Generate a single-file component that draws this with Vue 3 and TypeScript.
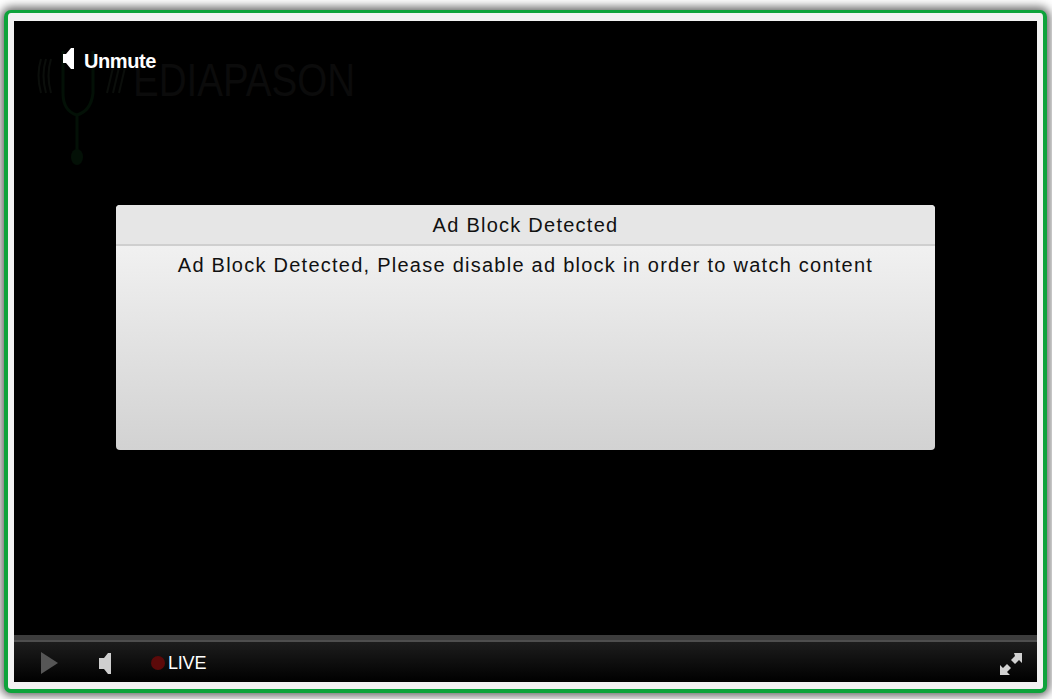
<template>
  <div class="page">
    <div class="frame">
      <div class="player">
        <div class="video">
          <!-- faint watermark logo -->
          <div class="logo">
            <svg class="logo-mark" width="100" height="125" viewBox="0 0 100 125" fill="none">
              <g stroke="#0b0e0b" stroke-width="2">
                <path d="M6 8 Q1 24 6 42" />
                <path d="M11 8 Q6 24 11 42" />
                <path d="M16 8 Q11 24 16 42" />
                <path d="M72 42 L80 8" />
                <path d="M78 42 L86 8" />
                <path d="M84 42 L92 8" />
              </g>
              <path d="M28 0 V42 Q28 60 42 64 Q56 60 58 42 V0" stroke="#031006" stroke-width="3" />
              <path d="M42 64 V100" stroke="#031006" stroke-width="3" />
              <ellipse cx="42" cy="106" rx="6" ry="8" fill="#031006" />
            </svg>
            <span class="logo-text">EDIAPASON</span>
          </div>

          <button class="unmute" type="button">
            <svg width="11" height="21" viewBox="0 0 11 21">
              <path d="M0 6 H3 L8 0 H11 V21 H8 L3 15 H0 Z" fill="#fff" />
            </svg>
            <span>Unmute</span>
          </button>

          <div class="modal">
            <div class="modal-header">Ad Block Detected</div>
            <div class="modal-body">Ad Block Detected, Please disable ad block in order to watch content</div>
          </div>
        </div>

        <div class="progress"></div>

        <div class="controls">
          <svg class="play" width="18" height="22" viewBox="0 0 18 22">
            <path d="M0 0 L17 11 L0 22 Z" fill="#565656" />
          </svg>
          <svg class="volume" width="12" height="21" viewBox="0 0 12 21">
            <path d="M0 5 H5 L9 0 H12 V21 H9 L5 16 H0 Z" fill="#cfcfcf" />
          </svg>
          <div class="live">
            <span class="live-dot"></span>
            <span>LIVE</span>
          </div>
          <svg class="fullscreen" width="22" height="23" viewBox="0 0 22 23">
            <path d="M14 1 H22 V11 L19 8 L15 12 L11 8 L15 4 Z" fill="#d2d2d2" />
            <path d="M0 13 L3 16 L7 12 L11 16 L7 20 L10 23 H0 Z" fill="#d2d2d2" />
          </svg>
        </div>
      </div>
    </div>
  </div>
</template>

<script setup lang="ts">
</script>

<style>
html,
body {
  margin: 0;
  background: #fff;
}
</style>

<style scoped>
.page {
  width: 1052px;
  height: 699px;
  padding: 10px 5px 6px 4px;
  box-sizing: border-box;
  overflow: hidden;
  font-family: "Liberation Sans", Arial, sans-serif;
}

.frame {
  height: 683px;
  box-sizing: border-box;
  border: 3px solid #0ea33b;
  border-left-width: 4px;
  border-right-width: 4px;
  border-bottom-width: 4px;
  border-radius: 7px;
  background: #f2f2f2;
  padding: 8px 6px 7px 6px;
  box-shadow: 0 0 10px 3px #666;
}

.player {
  height: 100%;
  display: flex;
  flex-direction: column;
  background: #000;
}

.video {
  position: relative;
  flex: 1;
  background: #000;
}

.logo {
  position: absolute;
  left: 21px;
  top: 30px;
  display: flex;
  align-items: flex-start;
}

.logo-text {
  margin: 4px 0 0 -2px;
  font-size: 47px;
  line-height: 50px;
  color: #0b0b0b;
  transform: scaleX(0.82);
  transform-origin: left center;
}

.unmute {
  position: absolute;
  left: 49px;
  top: 29px;
  display: flex;
  align-items: flex-start;
  gap: 10px;
  padding: 0;
  border: 0;
  background: none;
  color: #fff;
  font-family: inherit;
  font-size: 20px;
  font-weight: 700;
  letter-spacing: -0.4px;
}

.unmute svg {
  margin-top: -2px;
}

.modal {
  position: absolute;
  left: 102px;
  top: 184px;
  width: 819px;
  height: 245px;
  border-radius: 4px;
  overflow: hidden;
  background: linear-gradient(#f7f7f7, #d2d2d2);
  color: #111;
  font-size: 20px;
  letter-spacing: 1.25px;
  text-align: center;
}

.modal-header {
  height: 39px;
  line-height: 40px;
  background: #e6e6e6;
  border-bottom: 2px solid #cfcfcf;
}

.modal-body {
  line-height: 38px;
}

.progress {
  height: 7px;
  box-sizing: border-box;
  background: #3c3c3c;
  border-bottom: 2px solid #4e4e4e;
}

.controls {
  height: 40px;
  box-sizing: border-box;
  padding: 2px 15px 0 27px;
  display: flex;
  align-items: center;
  background: linear-gradient(#1d1d1d, #000);
}

.volume {
  margin-left: 40px;
}

.live {
  display: flex;
  align-items: center;
  gap: 3px;
  margin-left: 40px;
  color: #fff;
  font-size: 18px;
  letter-spacing: -0.2px;
}

.live-dot {
  width: 14px;
  height: 14px;
  border-radius: 50%;
  background: #5c0a0a;
}

.fullscreen {
  margin-left: auto;
}
</style>
